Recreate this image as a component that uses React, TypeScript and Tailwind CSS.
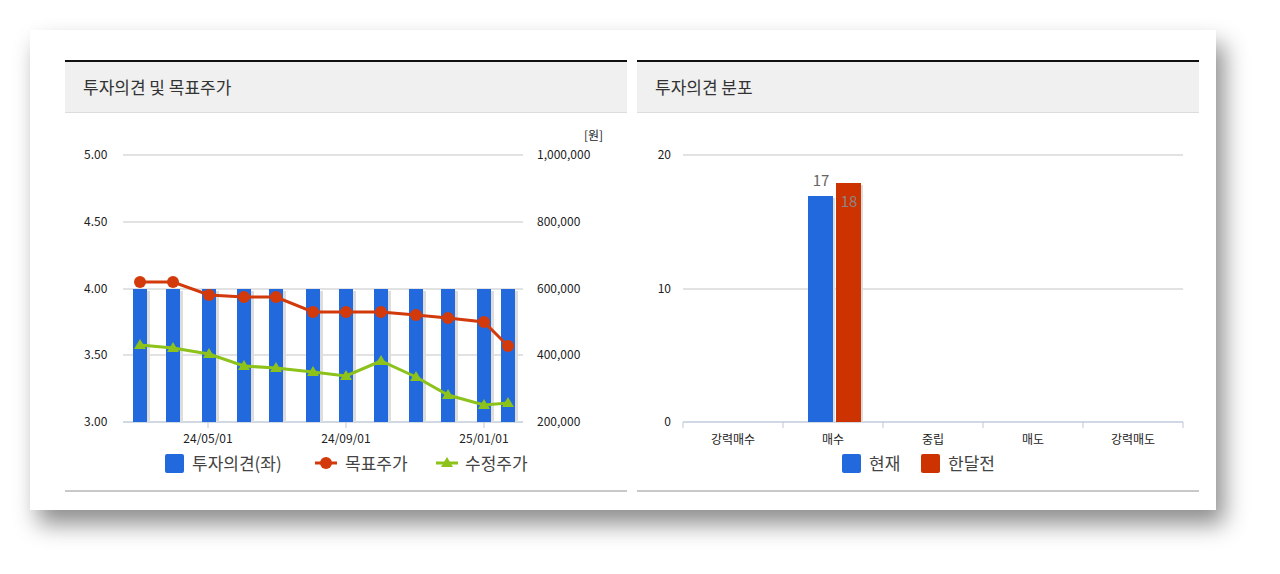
export default function App() {
  const bx = [140, 173, 209, 244, 276, 313, 346, 381, 416, 448, 484, 508];
  const red = [283, 283, 296, 298, 298, 313, 313, 313, 316, 319, 323, 347];
  const grn = [346, 349, 355, 367, 369, 373, 377, 362, 378, 396, 406, 404];
  const f = { fontFamily: '"Noto Sans CJK KR", "Noto Sans", sans-serif' };
  const tri = (x: number, y: number) => `${x},${y - 6} ${x - 6},${y + 4} ${x + 6},${y + 4}`;
  return (
    <div className="w-[1280px] h-[574px] bg-white relative overflow-hidden" style={f}>
      <div className="absolute left-[30px] top-[30px] w-[1186px] h-[480px] bg-white shadow-[8px_14px_22px_rgba(0,0,0,0.45)]" />
      <div className="absolute left-[30px] top-[30px] w-[1186px] h-[480px] flex gap-[10px] pl-[35px] pt-[30px]">
        <div className="w-[562px] h-[432px] flex flex-col border-b-2 border-[#c8c8c8]">
          <div className="h-[53px] border-t-2 border-[#111] bg-[#f0f0f0] border-b border-b-[#dcdcdc] flex items-center pl-[18px] text-[17px] text-[#333]">투자의견 및 목표주가</div>
          <svg width="562" height="377" viewBox="65 114 562 377" className="text-[12px]">
            {[156, 223, 290, 356].map(y => <line key={y} x1="123" x2="523" y1={y} y2={y} stroke="#e2e2e2" strokeWidth="2" />)}
            <line x1="123" x2="523" y1="423" y2="423" stroke="#d0d8e4" strokeWidth="2" />
            {[208, 346, 484].map(x => <line key={x} x1={x} x2={x} y1="423" y2="429" stroke="#c0c8d4" />)}
            {bx.map((x, i) => <g key={i}><rect x={x - 5} y="292" width="15" height="131" fill="#ddd" /><rect x={x - 7} y="290" width="14" height="133" fill="#2169dc" /></g>)}
            <polyline points={bx.map((x, i) => `${x},${grn[i]}`).join(' ')} fill="none" stroke="#8cc21a" strokeWidth="3" />
            {bx.map((x, i) => <polygon key={i} points={tri(x, grn[i])} fill="#8cc21a" />)}
            <polyline points={bx.map((x, i) => `${x},${red[i]}`).join(' ')} fill="none" stroke="#d23a0c" strokeWidth="3" />
            {bx.map((x, i) => <circle key={i} cx={x} cy={red[i]} r="6" fill="#d23a0c" />)}
            {[['5.00', 156], ['4.50', 223], ['4.00', 290], ['3.50', 356], ['3.00', 423]].map(([t, y]) => <text key={t} x="84" y={Number(y) + 4} fontSize="12" fill="#222">{t}</text>)}
            {[['1,000,000', 156], ['800,000', 223], ['600,000', 290], ['400,000', 356], ['200,000', 423]].map(([t, y]) => <text key={t} x="537" y={Number(y) + 4} fontSize="12" fill="#222">{t}</text>)}
            <text x="584" y="141" fontSize="12" fill="#222">[원]</text>
            {[['24/05/01', 208], ['24/09/01', 346], ['25/01/01', 484]].map(([t, x]) => <text key={t} x={x} y="444" textAnchor="middle" fontSize="12" fill="#222">{t}</text>)}
            <rect x="165" y="455" width="19" height="19" rx="2" fill="#2169dc" />
            <text x="192" y="471" fontSize="17" fill="#444">투자의견(좌)</text>
            <line x1="315" x2="337" y1="464" y2="464" stroke="#d23a0c" strokeWidth="3" /><circle cx="326" cy="464" r="6" fill="#d23a0c" />
            <text x="345" y="471" fontSize="17" fill="#444">목표주가</text>
            <line x1="436" x2="458" y1="464" y2="464" stroke="#8cc21a" strokeWidth="3" /><polygon points={tri(447, 464)} fill="#8cc21a" />
            <text x="465" y="471" fontSize="17" fill="#444">수정주가</text>
          </svg>
        </div>
        <div className="w-[562px] h-[432px] flex flex-col border-b-2 border-[#c8c8c8]">
          <div className="h-[53px] border-t-2 border-[#111] bg-[#f0f0f0] border-b border-b-[#dcdcdc] flex items-center pl-[18px] text-[17px] text-[#333]">투자의견 분포</div>
          <svg width="562" height="377" viewBox="637 114 562 377">
            {[156, 290].map(y => <line key={y} x1="683" x2="1183" y1={y} y2={y} stroke="#e2e2e2" strokeWidth="2" />)}
            <line x1="683" x2="1183" y1="423" y2="423" stroke="#d0d8e4" strokeWidth="2" />
            {[683, 783, 883, 983, 1083, 1183].map(x => <line key={x} x1={x} x2={x} y1="423" y2="429" stroke="#c0c8d4" />)}
            <rect x="810" y="199" width="25" height="224" fill="#ddd" />
            <rect x="838" y="186" width="25" height="237" fill="#ddd" />
            <rect x="808" y="197" width="25" height="226" fill="#2169dc" />
            <rect x="836" y="184" width="25" height="239" fill="#cc3300" />
            <text x="821" y="187" textAnchor="middle" fontSize="15" fill="#666">17</text>
            <text x="849" y="208" textAnchor="middle" fontSize="15" fill="#888">18</text>
            {[['20', 156], ['10', 290], ['0', 423]].map(([t, y]) => <text key={t} x="671" y={Number(y) + 4} textAnchor="end" fontSize="12" fill="#222">{t}</text>)}
            {['강력매수', '매수', '중립', '매도', '강력매도'].map((t, i) => <text key={t} x={733 + i * 100} y="445" textAnchor="middle" fontSize="12" fill="#222">{t}</text>)}
            <rect x="842" y="455" width="19" height="19" rx="2" fill="#2169dc" />
            <text x="869" y="471" fontSize="17" fill="#444">현재</text>
            <rect x="921" y="455" width="19" height="19" rx="2" fill="#cc3300" />
            <text x="948" y="471" fontSize="17" fill="#444">한달전</text>
          </svg>
        </div>
      </div>
    </div>
  );
}
